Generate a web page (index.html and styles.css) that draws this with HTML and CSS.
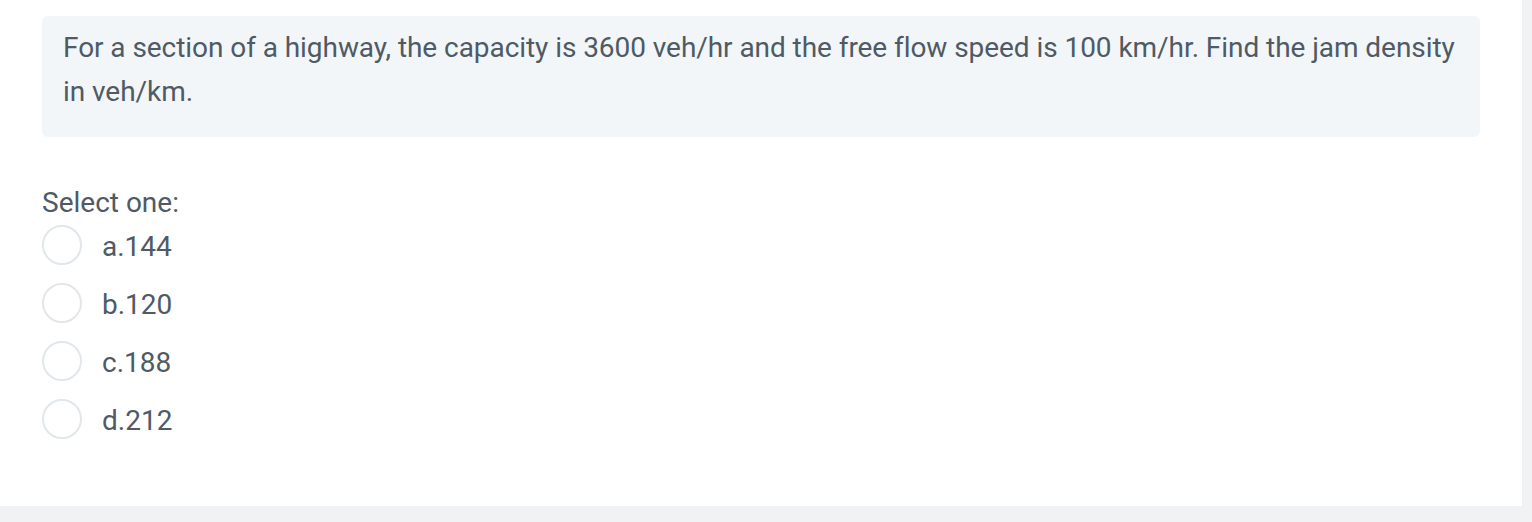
FILE: index.html
```html
<!DOCTYPE html>
<html>
<head>
<meta charset="utf-8">
<link rel="stylesheet" href="styles.css">
</head>
<body>
<div class="page">
  <div class="panel">
    <div class="question">For a section of a highway, the capacity is 3600 veh/hr and the free flow speed is 100 km/hr. Find the jam density in veh/km.</div>
    <div class="prompt">Select one:</div>
    <div class="options">
      <label class="option"><span class="radio"></span><span class="label">a.144</span></label>
      <label class="option"><span class="radio"></span><span class="label">b.120</span></label>
      <label class="option"><span class="radio"></span><span class="label">c.188</span></label>
      <label class="option"><span class="radio"></span><span class="label">d.212</span></label>
    </div>
  </div>
</div>
</body>
</html>
```
FILE: styles.css
```css
html, body {
  margin: 0;
  padding: 0;
  background: #f1f2f4;
}
body {
  font-family: Roboto, "Liberation Sans", sans-serif;
  color: #4f5a65;
}
.page {
  width: 1532px;
  height: 522px;
  overflow: hidden;
}
.panel {
  width: 1522px;
  height: 506px;
  background: #ffffff;
  box-sizing: border-box;
  padding: 16px 42px 0 42px;
}
.question {
  width: 1438px;
  box-sizing: border-box;
  background: #f2f6f9;
  border-radius: 6px;
  padding: 10px 12px 0 21px;
  font-size: 28px;
  letter-spacing: -0.06px;
  line-height: 44px;
  height: 121px;
}
.prompt {
  margin-top: 49px;
  font-size: 28px;
  line-height: 34px;
}
.options {
  display: flex;
  flex-direction: column;
  gap: 18px;
  margin-top: 5px;
}
.option {
  display: flex;
  align-items: center;
  height: 40px;
  font-size: 28px;
}
.radio {
  width: 40px;
  height: 40px;
  box-sizing: border-box;
  border: 2px solid #e2e7eb;
  border-radius: 50%;
  background: #fff;
  flex: none;
}
.label {
  margin-left: 20px;
  line-height: 40px;
  padding-top: 4px;
}
```
